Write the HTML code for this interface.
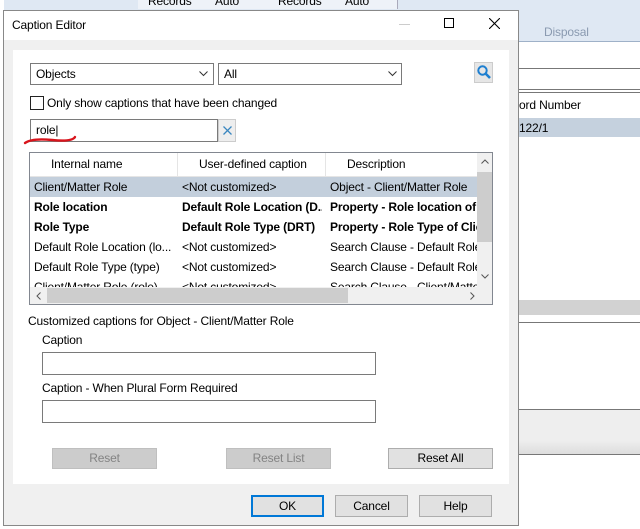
<!DOCTYPE html><html><head><style>
*{box-sizing:border-box;margin:0;padding:0}
body{width:640px;height:529px;position:relative;overflow:hidden;background:#fff;font-family:"Liberation Sans",sans-serif;font-size:12px;color:#000;letter-spacing:-0.15px}
.a{position:absolute}
.inp{position:absolute;background:#fff;border:1px solid #7a7a7a}
.btn{position:absolute;background:#e1e1e1;border:1px solid #adadad;text-align:center;line-height:18px}
.dis{background:#cccccc;border-color:#bfbfbf;color:#838383}
.row{position:absolute;left:0;height:20px;line-height:20px;width:447px;white-space:nowrap}
.row span{position:absolute;overflow:hidden}
.b{font-weight:bold}
</style></head><body>
<div class="a" style="left:0;top:0;width:640px;height:41px;background:#dfe8f3"></div>
<div class="a" style="left:138px;top:0;width:260px;height:9px;background:#eef2f8;border-right:1px solid #aab"></div>
<div class="a" style="left:148px;top:-6px">Records</div>
<div class="a" style="left:215px;top:-6px">Auto</div>
<div class="a" style="left:278px;top:-6px">Records</div>
<div class="a" style="left:345px;top:-6px">Auto</div>
<div class="a" style="left:544px;top:25px;color:#8a9ab0">Disposal</div>
<div class="a" style="left:519px;top:41px;width:121px;height:1px;background:#9fb1c8"></div>
<div class="a" style="left:519px;top:68px;width:121px;height:1px;background:#777"></div>
<div class="a" style="left:519px;top:89px;width:121px;height:4px;border-top:1px solid #777;border-bottom:1px solid #777"></div>
<div class="a" style="left:519px;top:98px;">ord Number</div>
<div class="a" style="left:519px;top:118px;width:121px;height:19px;background:#c5d1de"></div>
<div class="a" style="left:519px;top:121px;">122/1</div>
<div class="a" style="left:519px;top:300px;width:121px;height:15px;background:#d2d2d2"></div>
<div class="a" style="left:519px;top:322px;width:121px;height:1px;background:#777"></div>
<div class="a" style="left:519px;top:409px;width:121px;height:1px;background:#777"></div>
<div class="a" style="left:519px;top:410px;width:121px;height:45px;background:linear-gradient(#eee,#eee 70%,#ddd);border-bottom:1px solid #777"></div>
<div class="a" style="left:0;top:0;width:4px;height:529px;background:#fff"></div>
<div class="a" style="left:3px;top:10px;width:516px;height:516px;background:#f0f0f0;border:1px solid #888"></div>
<div class="a" style="left:4px;top:11px;width:514px;height:29px;background:#fff"></div>
<div class="a" style="left:12px;top:18px">Caption Editor</div>
<div class="a" style="left:399px;top:24px;width:11px;height:1px;background:#ccc"></div>
<div class="a" style="left:444px;top:18px;width:10px;height:10px;border:1px solid #000"></div>
<svg class="a" style="left:489px;top:18px" width="11" height="11"><path d="M0 0L11 11M11 0L0 11" stroke="#000" stroke-width="1.1"/></svg>
<div class="a" style="left:13px;top:50px;width:496px;height:434px;background:#fff"></div>
<div class="inp" style="left:30px;top:63px;width:184px;height:22px;padding:3px 5px">Objects</div>
<svg class="a" style="left:199px;top:71px" width="9" height="6"><path d="M0.5 .5L4.5 4.5L8.5 .5" fill="none" stroke="#333"/></svg>
<div class="inp" style="left:218px;top:63px;width:184px;height:22px;padding:3px 5px">All</div>
<svg class="a" style="left:388px;top:71px" width="9" height="6"><path d="M0.5 .5L4.5 4.5L8.5 .5" fill="none" stroke="#333"/></svg>
<div class="a" style="left:474px;top:62px;width:19px;height:21px;background:#e6e6e6;border:1px solid #ccc"></div>
<svg class="a" style="left:476px;top:64px" width="16" height="16"><circle cx="6.5" cy="6.5" r="4.2" fill="none" stroke="#1e7fd0" stroke-width="2"/><path d="M9.5 9.5L14 14" stroke="#1e7fd0" stroke-width="2.6"/></svg>
<div class="a" style="left:30px;top:96px;width:14px;height:14px;border:1px solid #222;background:#fff"></div>
<div class="a" style="left:47px;top:96px">Only show captions that have been changed</div>
<div class="inp" style="left:30px;top:119px;width:188px;height:23px;padding:3px 5px">role|</div>
<div class="a" style="left:218px;top:119px;width:18px;height:23px;background:#eee;border:1px solid #ccc"></div>
<svg class="a" style="left:223px;top:126px" width="9" height="9"><path d="M.5 .5L8.5 8.5M8.5 .5L.5 8.5" stroke="#3a87c0" stroke-width="1.3"/></svg>
<svg class="a" style="left:22px;top:132px" width="60" height="14"><path d="M3 11Q10 6 30 8T53 5" fill="none" stroke="#d8141c" stroke-width="2.4" stroke-linecap="round"/></svg>
<div class="a" style="left:29px;top:152px;width:464px;height:153px;border:1px solid #828790;background:#fff;overflow:hidden">
 <div class="a" style="left:0;top:0;width:447px;height:24px;border-bottom:1px solid #e5e5e5"></div>
 <div class="a" style="left:147px;top:0;width:1px;height:24px;background:#e5e5e5"></div>
 <div class="a" style="left:295px;top:0;width:1px;height:24px;background:#e5e5e5"></div>
 <div class="a" style="left:21px;top:4px">Internal name</div>
 <div class="a" style="left:169px;top:4px">User-defined caption</div>
 <div class="a" style="left:317px;top:4px">Description</div>
 <div class="row" style="top:24px;background:#c3cfdc"><span style="left:4px;width:140px">Client/Matter Role</span><span style="left:152px;width:140px">&lt;Not customized&gt;</span><span style="left:300px;width:147px">Object - Client/Matter Role</span></div>
 <div class="row b" style="top:44px"><span style="left:4px;width:140px">Role location</span><span style="left:152px;width:140px">Default Role Location (D...</span><span style="left:300px;width:147px">Property - Role location of Client</span></div>
 <div class="row b" style="top:64px"><span style="left:4px;width:140px">Role Type</span><span style="left:152px;width:140px">Default Role Type (DRT)</span><span style="left:300px;width:147px">Property - Role Type of Client</span></div>
 <div class="row" style="top:84px"><span style="left:4px;width:143px">Default Role Location (lo...</span><span style="left:152px;width:140px">&lt;Not customized&gt;</span><span style="left:300px;width:147px">Search Clause - Default Role</span></div>
 <div class="row" style="top:104px"><span style="left:4px;width:140px">Default Role Type (type)</span><span style="left:152px;width:140px">&lt;Not customized&gt;</span><span style="left:300px;width:147px">Search Clause - Default Role</span></div>
 <div class="row" style="top:124px"><span style="left:4px;width:140px">Client/Matter Role (role)</span><span style="left:152px;width:140px">&lt;Not customized&gt;</span><span style="left:300px;width:147px">Search Clause - Client/Matter</span></div>
 <div class="a" style="left:447px;top:0;width:16px;height:134px;background:#f0f0f0"></div>
 <div class="a" style="left:447px;top:19px;width:15px;height:70px;background:#cdcdcd"></div>
 <svg class="a" style="left:451px;top:6px" width="8" height="5"><path d="M.5 4.5L4 1L7.5 4.5" fill="none" stroke="#555"/></svg>
 <svg class="a" style="left:451px;top:121px" width="8" height="5"><path d="M.5 .5L4 4L7.5 .5" fill="none" stroke="#555"/></svg>
 <div class="a" style="left:0;top:134px;width:463px;height:18px;background:#f0f0f0"></div>
 <div class="a" style="left:17px;top:135px;width:301px;height:15px;background:#cdcdcd"></div>
 <svg class="a" style="left:6px;top:139px" width="5" height="8"><path d="M4.5 .5L1 4L4.5 7.5" fill="none" stroke="#555"/></svg>
 <svg class="a" style="left:440px;top:139px" width="5" height="8"><path d="M.5 .5L4 4L.5 7.5" fill="none" stroke="#555"/></svg>
</div>
<div class="a" style="left:28px;top:314px">Customized captions for Object - Client/Matter Role</div>
<div class="a" style="left:42px;top:333px">Caption</div>
<div class="inp" style="left:42px;top:352px;width:334px;height:23px"></div>
<div class="a" style="left:42px;top:381px">Caption - When Plural Form Required</div>
<div class="inp" style="left:42px;top:400px;width:334px;height:23px"></div>
<div class="btn dis" style="left:52px;top:448px;width:105px;height:21px">Reset</div>
<div class="btn dis" style="left:226px;top:448px;width:105px;height:21px">Reset List</div>
<div class="btn" style="left:388px;top:448px;width:105px;height:21px">Reset All</div>
<div class="btn" style="left:251px;top:495px;width:73px;height:22px;border:2px solid #0078d7;line-height:18px">OK</div>
<div class="btn" style="left:335px;top:495px;width:73px;height:22px;line-height:20px">Cancel</div>
<div class="btn" style="left:419px;top:495px;width:73px;height:22px;line-height:20px">Help</div>
</body></html>
